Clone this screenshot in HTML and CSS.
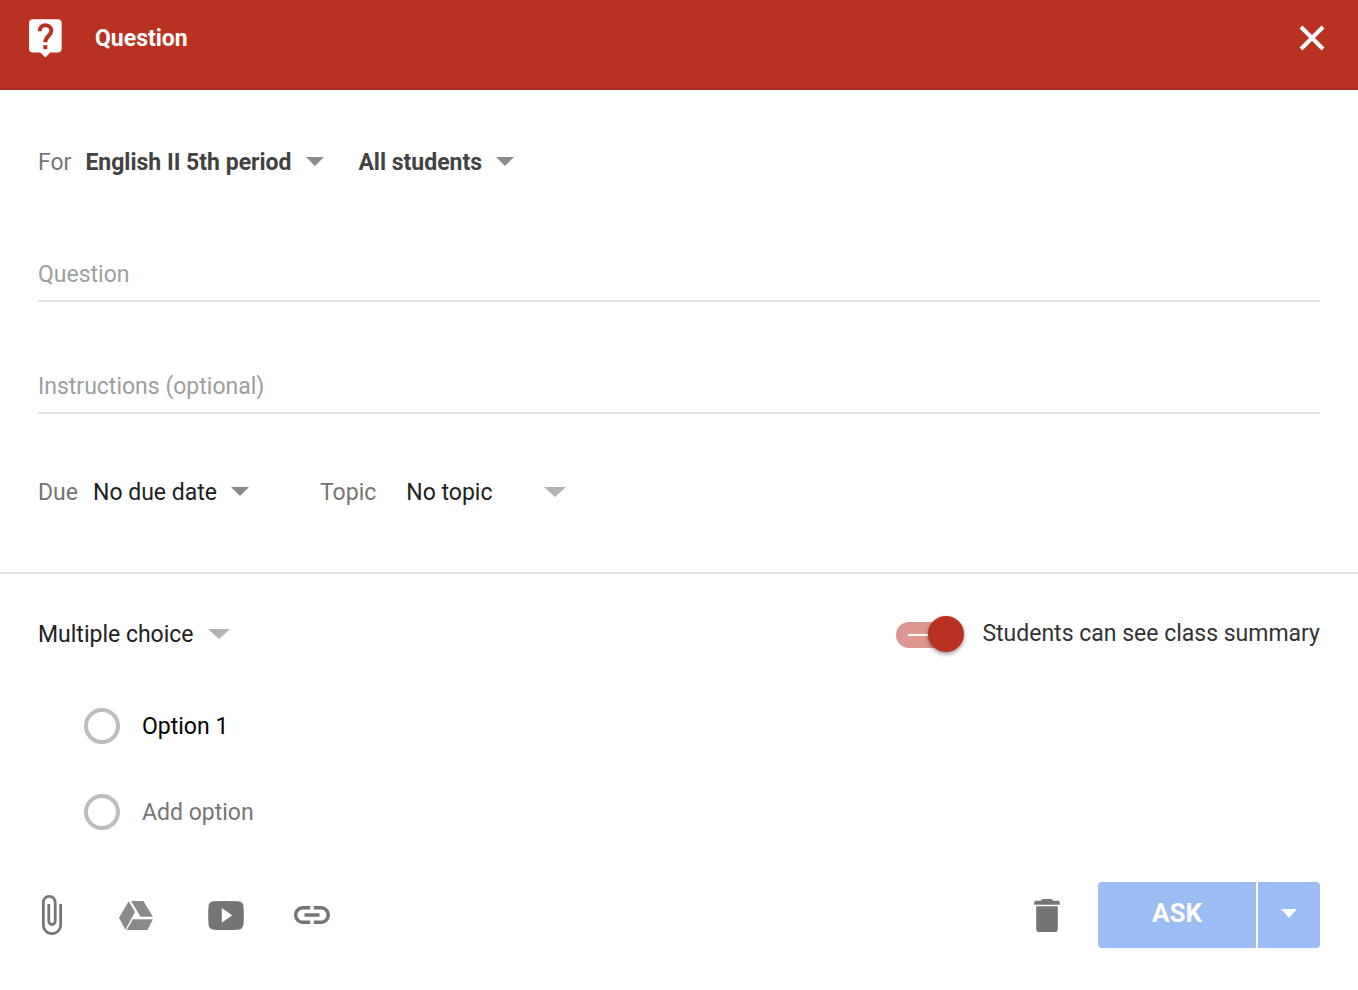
FILE: index.html
```html
<!DOCTYPE html>
<html lang="en">
<head>
  <meta charset="UTF-8" />
  <meta name="viewport" content="width=device-width, initial-scale=1" />
  <title>Question</title>
  <link rel="stylesheet" href="styles.css">
</head>
<body>
  <header class="topbar">
    <svg class="topbar-icon" viewBox="87 57 99 116" aria-hidden="true">
      <path fill="#fff" d="M99 57h74q12 0 12 12v76q0 12-12 12h-22l-15 15-15-15H99q-12 0-12-12V69q0-12 12-12z"/>
      <path fill="none" stroke="#b93221" stroke-width="12" d="M119 93c0-11 7-18 17-18s18 7 18 17c0 14-18 16-18 34"/>
      <path fill="#b93221" d="M130 135h12v12h-12z"/>
    </svg>
    <h1>Question</h1>
    <button class="close" type="button" aria-label="Close">
      <svg viewBox="0 0 26 26"><path d="M2 2l22 22M24 2L2 24"/></svg>
    </button>
  </header>

  <form>
    <section class="details">
      <div class="row row-for">
        <label for="course">For</label>
        <span class="pick bold"><select id="course"><option>English II 5th period</option></select></span>
        <span class="pick bold"><select aria-label="Students"><option>All students</option></select></span>
      </div>

      <input class="line" type="text" placeholder="Question" aria-label="Question">
      <input class="line" type="text" placeholder="Instructions (optional)" aria-label="Instructions">

      <div class="row row-due">
        <label for="due">Due</label>
        <span class="pick due"><select id="due"><option>No due date</option></select></span>
        <label for="topic">Topic</label>
        <span class="pick light topic"><select id="topic"><option>No topic</option></select></span>
      </div>
    </section>

    <section class="answers">
      <div class="row row-type">
        <span class="pick light"><select aria-label="Question type"><option>Multiple choice</option></select></span>
        <label class="summary"><input class="toggle" type="checkbox" checked>Students can see class summary</label>
      </div>
      <div class="option">
        <input type="radio" name="answer" id="opt1">
        <label for="opt1">Option 1</label>
      </div>
      <div class="option add">
        <input type="radio" name="answer" id="optNew">
        <label for="optNew">Add option</label>
      </div>
    </section>

    <footer class="actions">
      <button class="tool clip" type="button" aria-label="Attach file">
        <svg viewBox="7 1 11 22"><path d="M16.5 6v11.5c0 2.21-1.79 4-4 4s-4-1.79-4-4V5c0-1.38 1.12-2.5 2.5-2.5s2.5 1.12 2.5 2.5v10.5c0 .55-.45 1-1 1s-1-.45-1-1V6H10v9.5c0 1.38 1.12 2.5 2.5 2.5s2.5-1.12 2.5-2.5V5c0-2.21-1.79-4-4-4S7 2.79 7 5v12.5c0 3.04 2.46 5.5 5.5 5.5s5.5-2.46 5.5-5.5V6h-1.5z"/></svg>
      </button>
      <button class="tool drive" type="button" aria-label="Google Drive">
        <svg viewBox="297 63 102 87"><path d="M326 64l19 32-29 53-19-36zM333 63h37l29 47h-37zM339 118h60l-17 32h-62z"/></svg>
      </button>
      <button class="tool video" type="button" aria-label="YouTube">
        <svg viewBox="565 63 107 87"><path fill-rule="evenodd" d="M582 64q37-2 73 0 16 1 16 17 2 25 0 51-1 16-16 17-36 2-73 0-16-1-16-17-2-26 0-51 0-16 16-17zM606 84v44l31-22z"/></svg>
      </button>
      <button class="tool link" type="button" aria-label="Link">
        <svg viewBox="2 7 20 10"><path d="M3.9 12c0-1.71 1.39-3.1 3.1-3.1h4V7H7c-2.76 0-5 2.24-5 5s2.24 5 5 5h4v-1.9H7c-1.71 0-3.1-1.39-3.1-3.1zM7.8 13h8.4v-2H7.8v2zm9.2-6h-4v1.9h4c1.71 0 3.1 1.39 3.1 3.1s-1.39 3.1-3.1 3.1h-4V17h4c2.76 0 5-2.24 5-5s-2.24-5-5-5z"/></svg>
      </button>
      <button class="tool trash" type="button" aria-label="Delete">
        <svg viewBox="73 87 77 99"><path d="M98 87h27l5 5h14q6 0 6 6v6H73v-6q0-6 6-6h14zM79 109h65v67q0 10-10 10H89q-10 0-10-10z"/></svg>
      </button>
      <div class="ask">
        <button class="ask-main" type="submit">ASK</button>
        <button class="ask-more" type="button" aria-label="More options"></button>
      </div>
    </footer>
  </form>
</body>
</html>
```

FILE: styles.css
```css
* { box-sizing: border-box; }
body {
  margin: 0;
  background: #fff;
  color: #212121;
  font-family: Roboto, sans-serif;
  font-size: 23px;
  line-height: 30px;
}
button, input, select {
  margin: 0;
  padding: 0;
  border: none;
  background: none;
  color: inherit;
  font: inherit;
}
button, select { cursor: pointer; }
svg { display: block; }

.topbar {
  display: flex;
  align-items: center;
  height: 90px;
  padding: 0 33px 12px 29px;
  background: #b93221;
  border-bottom: 2px solid #a62b1e;
  color: #fff;
}
.topbar-icon {
  width: 33px;
  height: 39px;
}
.topbar h1 {
  margin: 0 auto 0 33px;
  padding-top: 2px;
  font-size: 23px;
  font-weight: 700;
}
.close svg {
  width: 26px;
  height: 26px;
  stroke: #fff;
  stroke-width: 4;
}

.details {
  padding: 58px 38px 64px;
  border-bottom: 2px solid #e0e0e0;
}
.row {
  display: flex;
  align-items: center;
}
.row label { color: #757575; }
.row-for { margin-bottom: 82px; }
.row-for label { margin-right: 14px; }
.row-for .pick { margin-right: 34px; }

/* drop-down with a triangle drawn over its right padding */
.pick {
  position: relative;
  display: flex;
}
.pick select {
  appearance: none;
  height: 30px;
  padding-right: 32px;
}
.pick::after {
  content: "";
  position: absolute;
  right: 0;
  top: 9px;
  border: 9px solid transparent;
  border-top-color: #8a8a8a;
  border-bottom: none;
  pointer-events: none;
}
.pick.bold {
  font-weight: 700;
  color: #424242;
}
.pick.light::after {
  border-width: 10px 11px 0;
  border-top-color: #b3b3b3;
}

.line {
  display: block;
  width: 100%;
  height: 42px;
  padding-bottom: 12px;
  border-bottom: 2px solid #e0e0e0;
  border-radius: 0;
  line-height: 28px;
  outline: none;
}
.line + .line { margin-top: 70px; }
.line::placeholder { color: #9e9e9e; }

.row-due { margin-top: 64px; }
.row-due label { margin-right: 15px; }
.due { margin-right: 71px; }
.row-due label[for="topic"] { margin-right: 30px; }
.pick.topic select { padding-right: 73px; }

.answers { padding: 42px 38px 0; }
.row-type { justify-content: space-between; }
.row-type .pick { padding-top: 2px; }
.row-type .pick::after { top: 11px; }
.row-type .pick select { padding-right: 36px; }
.row .summary {
  display: flex;
  align-items: center;
  gap: 18px;
  color: #333;
}
.toggle {
  appearance: none;
  position: relative;
  width: 68px;
  height: 36px;
}
.toggle::before {
  content: "";
  position: absolute;
  inset: 6px 4px 4px 0;
  border-radius: 13px;
  background: linear-gradient(#fff, #fff) 12px center / 24px 2px no-repeat #dc9890;
}
.toggle::after {
  content: "";
  position: absolute;
  right: 0;
  top: 0;
  width: 36px;
  height: 36px;
  border-radius: 50%;
  background: #b93221;
  box-shadow: 0 2px 4px rgba(0,0,0,0.4);
}

.option {
  display: flex;
  align-items: center;
  gap: 22px;
  margin: 56px 0 0 46px;
  color: #000;
}
.option.add {
  margin-top: 50px;
  color: #757575;
}
.option label { padding-top: 2px; }
.option input {
  appearance: none;
  width: 36px;
  height: 36px;
  border: 4px solid #bdbdbd;
  border-radius: 50%;
}
.option input:checked { background: #b93221; }

.actions {
  display: flex;
  align-items: center;
  gap: 48px;
  padding: 52px 38px 42px;
}
.tool {
  display: flex;
  justify-content: center;
}
.tool svg { fill: #757575; }
.clip { width: 28px; }
.clip svg { width: 22px; height: 40px; }
.drive { width: 44px; }
.drive svg { width: 34px; height: 29px; fill: #8a8a8a; }
.video { width: 40px; }
.video svg { width: 36px; height: 29px; }
.link svg { width: 36px; height: 20px; }
.trash { margin-left: auto; }
.trash svg { width: 26px; height: 33px; }

.ask {
  display: flex;
  gap: 2px;
  height: 66px;
  margin-left: -10px;
}
.ask button {
  padding-bottom: 4px;
  background: #9bbdf4;
  color: #fff;
}
.ask-main {
  width: 158px;
  border-radius: 4px 0 0 4px;
  font-size: 26px;
  font-weight: 700;
}
.ask-more {
  display: flex;
  align-items: center;
  justify-content: center;
  width: 62px;
  border-radius: 0 4px 4px 0;
}
.ask-more::after {
  content: "";
  border: 8px solid transparent;
  border-top: 9px solid #fff;
  border-bottom: none;
}
```
